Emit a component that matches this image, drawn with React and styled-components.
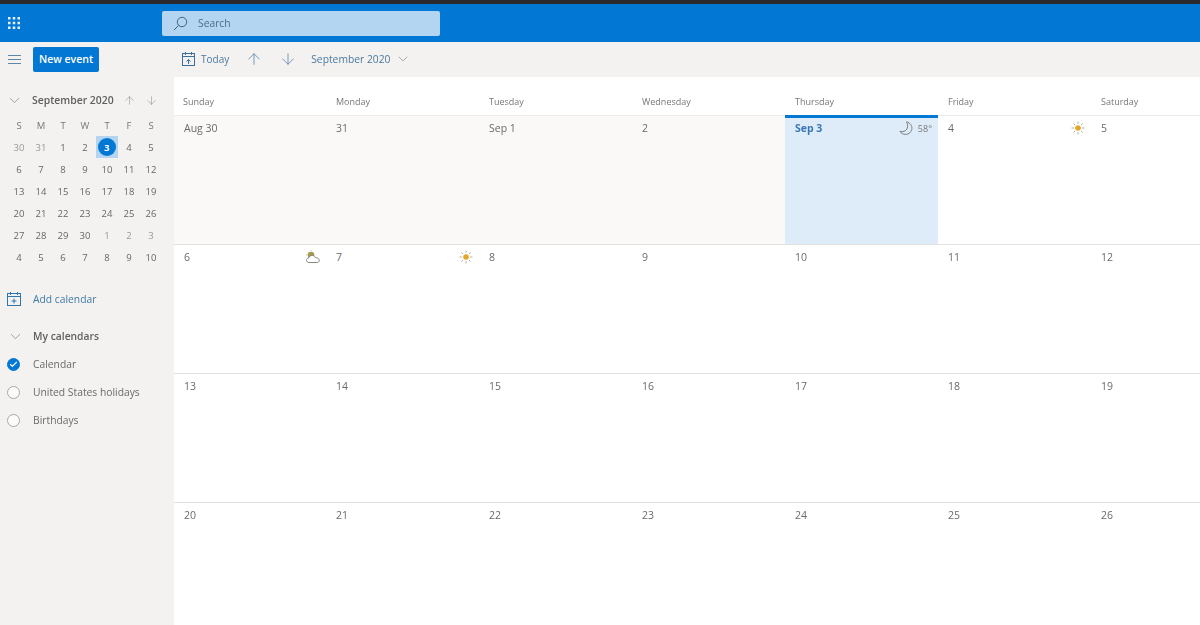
import React from 'react'
import styled, { createGlobalStyle } from 'styled-components'
import { Check, ChevronDown, ArrowUp, ArrowDown } from 'lucide-react'

const GlobalStyle = createGlobalStyle`
html, body {
  margin: 0;
  padding: 0;
  height: 625px;
  overflow: hidden;
  background: #fff;
  font-family: "Open Sans", "Noto Sans", "Liberation Sans", sans-serif;
}
* { box-sizing: border-box; }
`

const weekDays = ['Sunday', 'Monday', 'Tuesday', 'Wednesday', 'Thursday', 'Friday', 'Saturday']

const weeks = [
  [
    { label: 'Aug 30', past: true },
    { label: '31', past: true },
    { label: 'Sep 1', past: true },
    { label: '2', past: true },
    { label: 'Sep 3', today: true, weather: 'moon', temp: '58°' },
    { label: '4', weather: 'sun' },
    { label: '5' },
  ],
  [
    { label: '6', weather: 'cloud' },
    { label: '7', weather: 'sun' },
    { label: '8' }, { label: '9' }, { label: '10' }, { label: '11' }, { label: '12' },
  ],
  ['13', '14', '15', '16', '17', '18', '19'].map(label => ({ label })),
  ['20', '21', '22', '23', '24', '25', '26'].map(label => ({ label })),
]

const miniHead = ['S', 'M', 'T', 'W', 'T', 'F', 'S']
const miniDays = [
  30, 31, 1, 2, 3, 4, 5,
  6, 7, 8, 9, 10, 11, 12,
  13, 14, 15, 16, 17, 18, 19,
  20, 21, 22, 23, 24, 25, 26,
  27, 28, 29, 30, 1, 2, 3,
  4, 5, 6, 7, 8, 9, 10,
]

function Waffle () {
  const dots = []
  for (let y = 0; y < 3; y++) {
    for (let x = 0; x < 3; x++) {
      dots.push(<rect key={x + '-' + y} x={x * 4.75} y={y * 4.75} width="2.5" height="2.5" fill="#e8f2fb" />)
    }
  }
  return <svg width="12" height="12" viewBox="0 0 12 12">{dots}</svg>
}

function SearchGlyph () {
  return (
    <svg width="15" height="15" viewBox="0 0 15 15" fill="none" stroke="#3f6382" strokeWidth="1">
      <circle cx="9" cy="6" r="4.7" />
      <path d="M5.6 9.400L1 14" />
    </svg>
  )
}

function MenuGlyph () {
  return (
    <svg width="13" height="9" viewBox="0 0 13 9" stroke="#5b87ad" strokeWidth="1">
      <path d="M0 .5h13M0 4.500h13M0 8.500h13" />
    </svg>
  )
}

function TodayIcon () {
  return (
    <svg width="13" height="14" viewBox="0 0 13 14" fill="none" stroke="#3d6f9c" strokeWidth="1">
      <rect x=".5" y="1.500" width="12" height="12" />
      <path d="M.5 4.500h12M3.500 0v3M9.500 0v3" />
      <path d="M6.500 12V7.500M4.500 9.500l2-2 2 2" />
    </svg>
  )
}

function AddCalendarIcon () {
  return (
    <svg width="14" height="14" viewBox="0 0 14 14" fill="none" stroke="#2f75b0" strokeWidth="1">
      <rect x=".5" y="1.500" width="13" height="12" />
      <path d="M.5 4.500h13M3.500 0v3M10.500 0v3" />
      <path d="M7 6.500v5M4.500 9h5" />
    </svg>
  )
}

function SunIcon () {
  return (
    <svg width="14" height="14" viewBox="0 0 14 14" fill="none">
      <path d="M7 .5v2.300M7 11.200v2.300M.5 7h2.300M11.200 7h2.300M2.400 2.400l1.600 1.600M10 10l1.600 1.600M2.400 11.600L4 10M10 4l1.600-1.600" stroke="#b5b09c" strokeWidth="1" />
      <circle cx="7" cy="7" r="2.800" fill="#e3a52a" />
    </svg>
  )
}

function MoonIcon () {
  return (
    <svg width="15" height="15" viewBox="0 0 15 15" fill="none">
      <path d="M7.500 .8c3.600 1 5.600 3.600 5.400 6.600-.2 3.400-3 6-6.300 6-2.400 0-4.400-1-5.600-3 3 .8 5.800-.2 7-2.600C9 5.600 8.800 3 7.500 .8z" stroke="#7d7d7d" strokeWidth="1" />
    </svg>
  )
}

function CloudIcon () {
  return (
    <svg width="14" height="13" viewBox="0 0 14 13" fill="none">
      <circle cx="5" cy="5" r="3.300" fill="#a39a4e" />
      <path d="M5 .0v1M1.600 1.600l.8.8M0 5h1" stroke="#b5b09c" strokeWidth=".8" />
      <path d="M2.900 12.500c-1.400 0-2.400-.9-2.400-2.200 0-1.300 1-2.300 2.300-2.300.3-1.500 1.700-2.600 3.300-2.600 1.500 0 2.800.9 3.300 2.300 2-.2 3.900.9 3.900 2.600 0 1.300-1 2.200-2.400 2.200z" stroke="#8a8a80" strokeWidth="1" fill="#fff" />
    </svg>
  )
}

const weatherIcons = { sun: SunIcon, moon: MoonIcon, cloud: CloudIcon }

function DayCell ({ day }) {
  const Icon = day.weather && weatherIcons[day.weather]
  return (
    <Cell $past={day.past} $today={day.today}>
      <DayLabel $today={day.today}>{day.label}</DayLabel>
      {Icon && (
        <Weather>
          <Icon />
          {day.temp && <Temp>{day.temp}</Temp>}
        </Weather>
      )}
    </Cell>
  )
}

export default function App () {
  return (
    <Page>
      <GlobalStyle />
      <TopEdge />
      <Header>
        <WaffleBox><Waffle /></WaffleBox>
        <SearchBox>
          <SearchGlyph />
          <span>Search</span>
        </SearchBox>
      </Header>
      <Body>
        <Sidebar>
          <NewRow>
            <MenuButton><MenuGlyph /></MenuButton>
            <NewEvent>New event</NewEvent>
          </NewRow>
          <MiniHeader>
            <MiniChevron><ChevronDown size={17} strokeWidth={0.9} color="#777" /></MiniChevron>
            <MiniTitle>September 2020</MiniTitle>
            <MiniArrows>
              <ArrowUp size={13} strokeWidth={1} color="#888" />
              <ArrowDown size={13} strokeWidth={1} color="#888" />
            </MiniArrows>
          </MiniHeader>
          <MiniGrid>
            {miniHead.map((d, i) => <MiniHead key={i}>{d}</MiniHead>)}
            {miniDays.map((d, i) => {
              const outside = i < 2 || (i >= 32 && i < 35)
              return (
                <MiniDay key={i} $outside={outside} $selected={i === 4}>
                  {i === 4 ? <TodayDot>{d}</TodayDot> : d}
                </MiniDay>
              )
            })}
          </MiniGrid>
          <AddRow>
            <IconSlot><AddCalendarIcon /></IconSlot>
            <AddLabel>Add calendar</AddLabel>
          </AddRow>
          <MyCalendars>
            <IconSlot><ChevronDown size={17} strokeWidth={0.9} color="#777" /></IconSlot>
            <strong>My calendars</strong>
          </MyCalendars>
          <CalRow>
            <IconSlot><Radio $on><Check size={9} strokeWidth={3} color="#fff" /></Radio></IconSlot>
            Calendar
          </CalRow>
          <CalRow>
            <IconSlot><Radio /></IconSlot>
            United States holidays
          </CalRow>
          <CalRow>
            <IconSlot><Radio /></IconSlot>
            Birthdays
          </CalRow>
        </Sidebar>
        <Main>
          <Toolbar>
            <ToolItem>
              <TodayIcon />
              <ToolLabel>Today</ToolLabel>
            </ToolItem>
            <ToolArrow $gap={16}><ArrowUp size={18} strokeWidth={0.9} color="#3d6f9c" /></ToolArrow>
            <ToolArrow $gap={16}><ArrowDown size={18} strokeWidth={0.9} color="#3d6f9c" /></ToolArrow>
            <ToolItem $gap={14}>
              <ToolLabel $flush>September 2020</ToolLabel>
              <ChevronDown size={16} strokeWidth={0.9} color="#777" />
            </ToolItem>
          </Toolbar>
          <WeekHead>
            {weekDays.map(d => <WeekDay key={d}>{d}</WeekDay>)}
          </WeekHead>
          <MonthGrid>
            {weeks.flat().map((day, i) => <DayCell key={i} day={day} />)}
          </MonthGrid>
        </Main>
      </Body>
    </Page>
  )
}

const Page = styled.div`
width: 1200px;
height: 625px;
overflow: hidden;
display: flex;
flex-direction: column;
filter: blur(0.3px);
`
const TopEdge = styled.div`
height: 4px;
background: #2a2a2c;
flex: none;
`
const Header = styled.header`
height: 38px;
flex: none;
background: #0277d4;
display: flex;
align-items: center;
`
const WaffleBox = styled.div`
width: 162px;
padding-left: 8px;
display: flex;
align-items: center;
`
const SearchBox = styled.div`
width: 278px;
height: 25px;
background: #b3d5f2;
border-radius: 2px;
display: flex;
align-items: center;
padding-left: 11px;
font-size: 10.3px;
color: #4a6c88;
span { margin-left: 10px; }
`
const Body = styled.div`
flex: 1;
display: flex;
min-height: 0;
`
const Sidebar = styled.aside`
width: 174px;
flex: none;
background: #f3f2f1;
`
const NewRow = styled.div`
height: 35px;
padding-bottom: 1px;
display: flex;
align-items: center;
`
const MenuButton = styled.div`
width: 33px;
padding-left: 8px;
display: flex;
`
const NewEvent = styled.div`
width: 66px;
height: 25px;
background: #0277d4;
border-radius: 2px;
color: #fff;
font-size: 10.5px;
font-weight: 600;
display: flex;
align-items: center;
justify-content: center;
`
const MiniHeader = styled.div`
height: 20px;
margin-top: 13px;
display: flex;
align-items: center;
`
const MiniChevron = styled.div`
width: 32px;
padding-left: 6px;
display: flex;
`
const MiniTitle = styled.div`
width: 90px;
font-size: 10.4px;
font-weight: 600;
color: #5f5f5f;
white-space: nowrap;
`
const MiniArrows = styled.div`
display: flex;
gap: 9px;
margin-left: 1px;
`
const MiniGrid = styled.div`
margin: 4px 0 0 8px;
display: grid;
grid-template-columns: repeat(7, 22px);
grid-auto-rows: 22px;
`
const MiniHead = styled.div`
display: flex;
align-items: center;
justify-content: center;
font-size: 9.5px;
color: #777;
`
const MiniDay = styled.div`
display: flex;
align-items: center;
justify-content: center;
font-size: 9.5px;
color: ${p => (p.$outside ? '#999' : '#666')};
background: ${p => (p.$selected ? '#b3d5f2' : 'transparent')};
`
const TodayDot = styled.div`
width: 18px;
height: 18px;
border-radius: 50%;
background: #0277d4;
color: #fff;
font-weight: 700;
display: flex;
align-items: center;
justify-content: center;
`
const AddRow = styled.div`
margin-top: 17px;
height: 28px;
display: flex;
align-items: center;
`
const IconSlot = styled.div`
width: 33px;
padding-left: 7px;
display: flex;
align-items: center;
flex: none;
`
const AddLabel = styled.span`
font-size: 10.3px;
color: #3f7aa6;
`
const MyCalendars = styled.div`
margin-top: 9px;
height: 28px;
display: flex;
align-items: center;
font-size: 10.3px;
color: #5f5f5f;
strong { font-weight: 600; }
`
const CalRow = styled.div`
height: 28px;
display: flex;
align-items: center;
font-size: 10.3px;
color: #6a6a6a;
`
const Radio = styled.div`
width: 13px;
height: 13px;
border-radius: 50%;
background: ${p => (p.$on ? '#0277d4' : '#fbfbfb')};
border: 1px solid ${p => (p.$on ? '#0277d4' : '#a8a6a4')};
display: flex;
align-items: center;
justify-content: center;
`
const Main = styled.main`
flex: 1;
min-width: 0;
display: flex;
flex-direction: column;
`
const Toolbar = styled.div`
height: 35px;
flex: none;
padding: 0 0 1px 8px;
background: #f3f2f1;
display: flex;
align-items: center;
`
const ToolItem = styled.div`
display: flex;
align-items: center;
margin-left: ${p => p.$gap || 0}px;
`
const ToolLabel = styled.span`
font-size: ${p => (p.$flush ? '10.3px' : '10px')};
color: #4a7a9f;
margin: ${p => (p.$flush ? '0 5px 0 0' : '0 0 0 6px')};
`
const ToolArrow = styled.div`
display: flex;
margin-left: ${p => p.$gap}px;
`
const WeekHead = styled.div`
height: 39px;
flex: none;
display: grid;
grid-template-columns: repeat(7, 153px);
border-bottom: 1px solid #edebe9;
`
const WeekDay = styled.div`
padding: 18px 0 0 9px;
font-size: 9px;
color: #777;
`
const MonthGrid = styled.div`
display: grid;
grid-template-columns: 152px repeat(6, 153px);
grid-auto-rows: 129px;
`
const Cell = styled.div`
padding: ${p => (p.$today ? '3px' : '5px')} 6px 0 10px;
margin-top: ${p => (p.$today ? '-1px' : '0')};
display: flex;
justify-content: space-between;
align-items: flex-start;
border-bottom: 1px solid #e4e2e0;
border-top: ${p => (p.$today ? '3px solid #0277d4' : '0')};
background: ${p => (p.$today ? '#deecf9' : p.$past ? '#faf9f8' : '#fff')};
`
const DayLabel = styled.span`
font-size: 10.5px;
line-height: 14px;
color: ${p => (p.$today ? '#3a78b5' : '#6a6a6a')};
font-weight: ${p => (p.$today ? 700 : 400)};
`
const Weather = styled.div`
display: flex;
align-items: center;
gap: 4px;
`
const Temp = styled.span`
font-size: 9px;
color: #777;
`
